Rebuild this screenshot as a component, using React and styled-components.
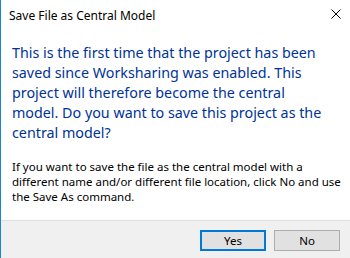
import React from 'react';
import styled, { createGlobalStyle } from 'styled-components';

const GlobalStyle = createGlobalStyle`
  html, body {
    margin: 0;
    padding: 0;
    background: #ffffff;
  }
  body {
    font-family: "Noto Sans", "Open Sans", sans-serif;
  }
`;

const Window = styled.div`
  width: 350px;
  height: 258px;
  box-sizing: border-box;
  border-left: 1px solid #1883d7;
  background: #ffffff;
  display: flex;
  flex-direction: column;
  overflow: hidden;
`;

const TitleBar = styled.div`
  height: 30px;
  display: flex;
  align-items: center;
  justify-content: space-between;
  padding-left: 8px;
  padding-right: 9px;
`;

const Title = styled.div`
  font-size: 12px;
  color: #000000;
`;

const CloseIcon = styled.svg`
  width: 10px;
  height: 10px;
  margin-top: -2px;
`;

const Content = styled.div`
  flex: 1;
  padding: 13px 0 0 11px;
  white-space: nowrap;
`;

const Instruction = styled.div`
  font-size: 14.3px;
  line-height: 20px;
  color: #003399;
`;

const Note = styled.div`
  margin-top: 16px;
  font-size: 11.5px;
  line-height: 15px;
  color: #000000;
`;

const Footer = styled.div`
  height: 38px;
  box-sizing: border-box;
  border-top: 1px solid #dfdfdf;
  background: #f0f0f0;
  display: flex;
  justify-content: flex-end;
  align-items: flex-start;
  gap: 8px;
  padding: 9px 10px 0 0;
`;

const Button = styled.button`
  width: 66px;
  height: 21px;
  box-sizing: border-box;
  margin: 0;
  padding: 0;
  background: #e1e1e1;
  border: ${p => (p.$focused ? '2px solid #0078d7' : '1px solid #adadad')};
  font-family: "Noto Sans", "Open Sans", sans-serif;
  font-size: 11.5px;
  color: #000000;
  cursor: pointer;
`;

export default function App() {
  return (
    <>
      <GlobalStyle />
      <Window>
        <TitleBar>
          <Title>Save File as Central Model</Title>
          <CloseIcon viewBox="0 0 10 10">
            <path d="M0.5 0.5 L9.5 9.5 M9.5 0.5 L0.5 9.5" stroke="#000" strokeWidth="1" fill="none" />
          </CloseIcon>
        </TitleBar>
        <Content>
          <Instruction>
            This is the first time that the project has been<br />
            saved since Worksharing was enabled. This<br />
            project will therefore become the central<br />
            model. Do you want to save this project as the<br />
            central model?
          </Instruction>
          <Note>
            If you want to save the file as the central model with a<br />
            different name and/or different file location, click No and use<br />
            the Save As command.
          </Note>
        </Content>
        <Footer>
          <Button $focused>Yes</Button>
          <Button>No</Button>
        </Footer>
      </Window>
    </>
  );
}
